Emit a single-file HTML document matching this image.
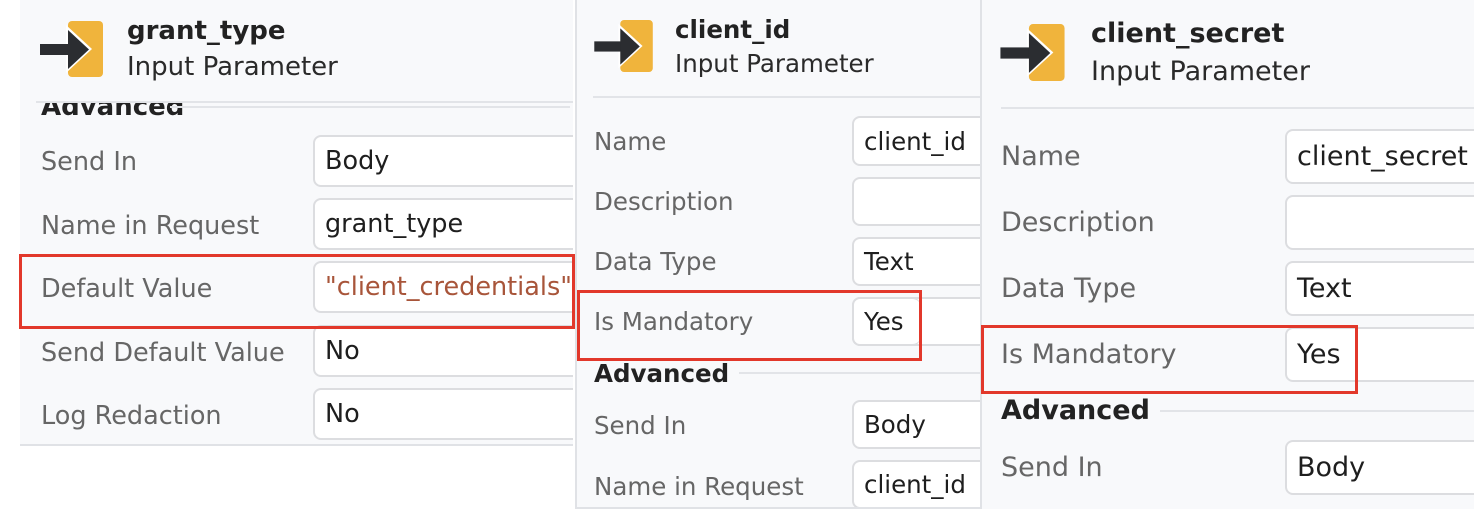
<!DOCTYPE html>
<html><head><meta charset="utf-8">
<style>
*{margin:0;padding:0;box-sizing:border-box}
body{width:1474px;height:524px;background:#fff;position:relative;overflow:hidden;font-family:"DejaVu Sans","Liberation Sans",sans-serif}
.p{position:absolute;background:#f8f9fb;overflow:hidden}
.a{position:absolute;white-space:nowrap}
.t{font-weight:bold;color:#222}
.sub{color:#2a2a2a}
.l{color:#666}
.in{position:absolute;background:#fff;border:2px solid #dcdde0;border-radius:8px;color:#1e1e1e;white-space:nowrap;padding-left:10px;display:flex;align-items:center}
.hr{position:absolute;height:2px;background:#e2e4e8}
.red{position:absolute;border:3px solid #e2382b}
</style></head><body>

<!-- Panel 1 -->
<div class="p" style="left:20px;top:0;width:553px;height:446px;border-bottom:2px solid #e0e2e6;font-size:25.5px">
  <div class="a t" style="left:21px;top:92px;font-size:26px">Advanced</div>
  <div class="a" style="left:0;top:0;width:553px;height:101px;background:#f8f9fb"></div>
  <svg class="a" style="left:20px;top:21px" width="64" height="56" viewBox="0 0 64 56">
    <rect x="28" y="0" width="35" height="56" rx="4" fill="#f0b43c"/>
    <polygon points="26,4 52,28 26,52" fill="#fff"/>
    <rect x="0" y="23" width="40" height="11" fill="#2b2d31"/>
    <polygon points="28,9 49,28.5 28,48" fill="#2b2d31"/>
  </svg>
  <div class="a t" style="left:107px;top:16px;font-size:26px">grant_type</div>
  <div class="a sub" style="left:107px;top:52px;font-size:26px">Input Parameter</div>
  <div class="hr" style="left:16px;top:101px;width:540px"></div>
  <div class="hr" style="left:150px;top:106px;width:400px"></div>
  <div class="a l" style="left:21px;top:147px">Send In</div>
  <div class="in" style="left:293px;top:135px;width:280px;height:52px">Body</div>
  <div class="a l" style="left:21px;top:211px">Name in Request</div>
  <div class="in" style="left:293px;top:198px;width:280px;height:52px">grant_type</div>
  <div class="a l" style="left:21px;top:274px">Default Value</div>
  <div class="in" style="left:293px;top:261px;width:280px;height:52px;color:#a8553a">"client_credentials"</div>
  <div class="a l" style="left:21px;top:338px">Send Default Value</div>
  <div class="in" style="left:293px;top:325px;width:280px;height:52px">No</div>
  <div class="a l" style="left:21px;top:401px">Log Redaction</div>
  <div class="in" style="left:293px;top:388px;width:280px;height:52px">No</div>
</div>
<div class="red" style="left:19px;top:254px;width:556px;height:75px"></div>

<!-- Panel 2 -->
<div class="p" style="left:575px;top:0;width:406px;height:509px;border-left:2px solid #e0e2e6;border-bottom:2px solid #e0e2e6;font-size:24.5px">
  <svg class="a" style="left:16px;top:20px" width="62" height="52" viewBox="0 0 64 56">
    <rect x="28" y="0" width="35" height="56" rx="4" fill="#f0b43c"/>
    <polygon points="26,4 52,28 26,52" fill="#fff"/>
    <rect x="0" y="23" width="40" height="11" fill="#2b2d31"/>
    <polygon points="28,9 49,28.5 28,48" fill="#2b2d31"/>
  </svg>
  <div class="a t" style="left:98px;top:15px">client_id</div>
  <div class="a sub" style="left:98px;top:49px">Input Parameter</div>
  <div class="hr" style="left:16px;top:96px;width:400px"></div>
  <div class="a l" style="left:17px;top:127px">Name</div>
  <div class="in" style="left:275px;top:116px;width:140px;height:50px">client_id</div>
  <div class="a l" style="left:17px;top:187px">Description</div>
  <div class="in" style="left:275px;top:177px;width:140px;height:49px"></div>
  <div class="a l" style="left:17px;top:247px">Data Type</div>
  <div class="in" style="left:275px;top:237px;width:140px;height:49px">Text</div>
  <div class="in" style="left:275px;top:297px;width:140px;height:49px"></div>
  <div class="a l" style="left:17px;top:307px">Is Mandatory</div>
  <div class="in" style="left:275px;top:297px;width:68px;height:49px;border-right:none">Yes</div>
  <div class="a t" style="left:17px;top:359px">Advanced</div>
  <div class="hr" style="left:162px;top:372px;width:300px"></div>
  <div class="a l" style="left:17px;top:411px">Send In</div>
  <div class="in" style="left:275px;top:400px;width:140px;height:49px">Body</div>
  <div class="a l" style="left:17px;top:472px">Name in Request</div>
  <div class="in" style="left:275px;top:460px;width:140px;height:49px">client_id</div>
</div>
<div class="red" style="left:577px;top:290px;width:345px;height:71px"></div>

<!-- Panel 3 -->
<div class="p" style="left:980px;top:0;width:494px;height:509px;border-left:2px solid #e0e2e6;font-size:27px">
  <svg class="a" style="left:18px;top:24px" width="66" height="57" viewBox="0 0 64 56">
    <rect x="28" y="0" width="35" height="56" rx="4" fill="#f0b43c"/>
    <polygon points="26,4 52,28 26,52" fill="#fff"/>
    <rect x="0" y="23" width="40" height="11" fill="#2b2d31"/>
    <polygon points="28,9 49,28.5 28,48" fill="#2b2d31"/>
  </svg>
  <div class="a t" style="left:109px;top:18px">client_secret</div>
  <div class="a sub" style="left:109px;top:56px">Input Parameter</div>
  <div class="hr" style="left:19px;top:107px;width:480px"></div>
  <div class="a l" style="left:19px;top:141px">Name</div>
  <div class="in" style="left:303px;top:129px;width:200px;height:55px">client_secret</div>
  <div class="a l" style="left:19px;top:207px">Description</div>
  <div class="in" style="left:303px;top:195px;width:200px;height:55px"></div>
  <div class="a l" style="left:19px;top:273px">Data Type</div>
  <div class="in" style="left:303px;top:261px;width:200px;height:55px">Text</div>
  <div class="a l" style="left:19px;top:339px">Is Mandatory</div>
  <div class="in" style="left:303px;top:327px;width:200px;height:55px">Yes</div>
  <div class="a t" style="left:19px;top:395px">Advanced</div>
  <div class="hr" style="left:178px;top:410px;width:320px"></div>
  <div class="a l" style="left:19px;top:452px">Send In</div>
  <div class="in" style="left:303px;top:440px;width:200px;height:55px">Body</div>
</div>
<div class="red" style="left:981px;top:325px;width:377px;height:69px"></div>

</body></html>
